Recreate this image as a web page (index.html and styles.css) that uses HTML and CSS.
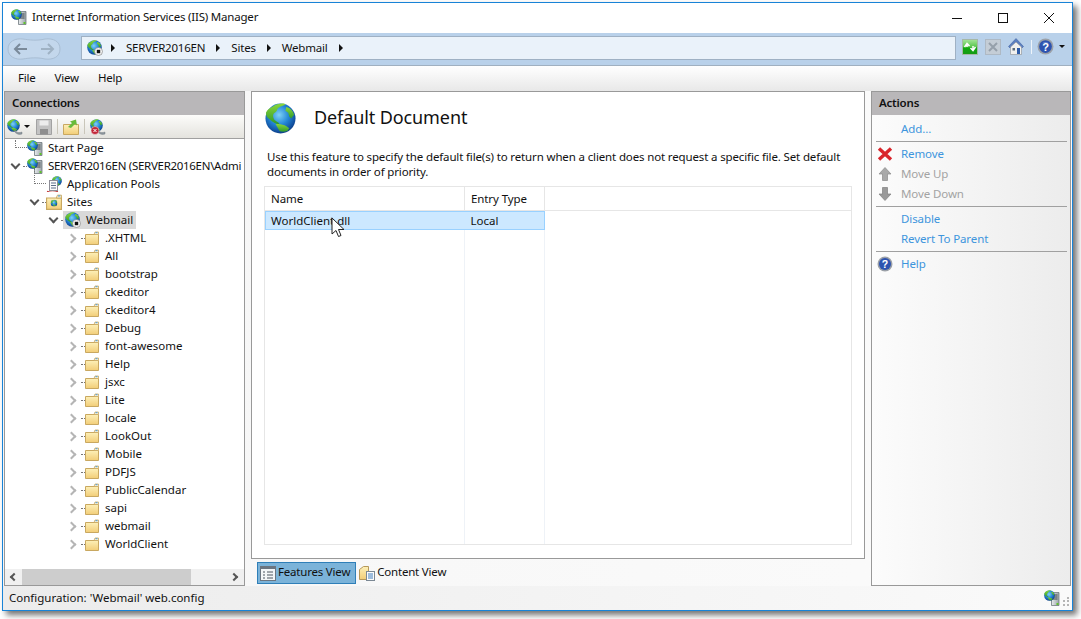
FILE: index.html
```html
<!DOCTYPE html>
<html lang="en">
<head>
    <meta charset="UTF-8">
    <title>Internet Information Services (IIS) Manager</title>
    <link rel="stylesheet" href="styles.css">
</head>
<body>
    <svg class="defs" width="0" height="0">
        <defs>
            <radialGradient id="sea" cx="45%" cy="38%" r="65%">
                <stop offset="0" stop-color="#7fd2f5"/>
                <stop offset="0.5" stop-color="#2487d8"/>
                <stop offset="0.85" stop-color="#12509f"/>
                <stop offset="1" stop-color="#0e3a7c"/>
            </radialGradient>
            <linearGradient id="landFill" x1="0" y1="0" x2="0" y2="1">
                <stop offset="0" stop-color="#8ad63a"/>
                <stop offset="1" stop-color="#2f9a2c"/>
            </linearGradient>
            <linearGradient id="folderFill" x1="0" y1="0" x2="0" y2="1">
                <stop offset="0" stop-color="#fdf0b8"/>
                <stop offset="1" stop-color="#f2cd77"/>
            </linearGradient>
            <linearGradient id="towerFill" x1="0" y1="0" x2="1" y2="0">
                <stop offset="0" stop-color="#e8ecee"/>
                <stop offset="1" stop-color="#9aa3a8"/>
            </linearGradient>
            <linearGradient id="goFill" x1="0" y1="0" x2="0" y2="1">
                <stop offset="0" stop-color="#a5e59a"/>
                <stop offset="0.5" stop-color="#58c64b"/>
                <stop offset="0.55" stop-color="#0fa80f"/>
                <stop offset="1" stop-color="#169a16"/>
            </linearGradient>
            <symbol id="globe" viewBox="0 0 32 32">
                <circle cx="16" cy="16" r="15.500" fill="url(#sea)"/>
                <path d="M9 3c3-2 8-3 12-2-1 2-5 2-7 4-2 1-1 4-4 5-2 1-2 4-1 6 1 3 5 3 6 6-3 0-7-2-10-5-3-2-4-4-4-7 1-3 4-5 8-7z" fill="url(#landFill)"/>
                <path d="M22 4c4 1 7 4 8 8l-3 4-2-2-1-4-3-2z" fill="url(#landFill)"/>
                <path d="M11 22c3-1 8 0 11 2l3 2-2 3c-3 1-6 1-8 0z" fill="url(#landFill)"/>
            </symbol>
            <symbol id="server" viewBox="0 0 16 16">
                <path d="M7.500 2.500h7.500v13h-7.500z" fill="url(#towerFill)" stroke="#6f787d" stroke-width="0.800"/>
                <path d="M9 5h4.500M9 7h4.500M9 9h4.500" stroke="#3f4649" stroke-width="1"/>
                <rect x="12.500" y="13" width="2" height="2" fill="#5fc32a"/>
                <use href="#globe" x="0" y="0" width="11" height="11"/>
            </symbol>
            <symbol id="folder" viewBox="0 0 14 14">
                <path d="M.5 3.500h13v10h-13z" fill="url(#folderFill)" stroke="#c9a860"/>
                <path d="M9 3.500l1-2.500h3.500v2.500z" fill="#f8f3dd" stroke="#c9a860" stroke-width="0.800"/>
                <path d="M10.500 1.700h2" stroke="#4f9bd8"/>
            </symbol>
            <symbol id="webglobe" viewBox="0 0 16 16">
                <use href="#globe" x="0" y="0" width="15" height="15"/>
                <circle cx="11.500" cy="11.500" r="4" fill="#f4f4f4" stroke="#777" stroke-width="0.600"/>
                <rect x="9.800" y="9.800" width="3.400" height="3.400" fill="#111"/>
            </symbol>
            <symbol id="connect" viewBox="0 0 16 16">
                <use href="#globe" x="0" y="0" width="13" height="13"/>
                <path d="M8 11c2 3 4 3 7 2v2c-3 1-6 0-8-3z" fill="#8e979e" stroke="#6b747b" stroke-width="0.400"/>
            </symbol>
            <symbol id="helpdot" viewBox="0 0 16 16">
                <circle cx="8" cy="8" r="7.500" fill="#9ba0a7"/>
                <circle cx="8" cy="8" r="6" fill="#2d53b0"/>
                <path d="M5 5a4 3 0 0 1 6 0" fill="#7d97d8"/>
            </symbol>
        </defs>
    </svg>

    <div class="window">
        <header class="titlebar">
            <svg class="title-icon"><use href="#server"/></svg>
            <span class="title-text">Internet Information Services (IIS) Manager</span>
            <div class="caption">
                <svg width="46" height="30"><path d="M18 15.500h10" stroke="#111"/></svg>
                <svg width="46" height="30"><rect x="18.500" y="10.500" width="9" height="9" fill="none" stroke="#111"/></svg>
                <svg width="46" height="30"><path d="M18 10l10 10M28 10l-10 10" stroke="#111" fill="none"/></svg>
            </div>
        </header>

        <nav class="navbar">
            <div class="nav-pill">
                <svg width="54" height="26" viewBox="0 0 54 26">
                    <path d="M1 13C1 5 9 2 16 3c6 1 14 2 22 0 8-1 15 2 15 10s-7 11-15 10c-8-2-16-1-22 0C9 24 1 21 1 13z" fill="#c3d7ec" stroke="#a9bed4"/>
                    <path d="M20 13H8m5-5l-5 5 5 5" fill="none" stroke="#7a8a9a" stroke-width="2"/>
                    <path d="M34 13h12m-5-5l5 5-5 5" fill="none" stroke="#9fb2c4" stroke-width="2"/>
                </svg>
            </div>
            <div class="address">
                <svg class="addr-icon"><use href="#webglobe"/></svg>
                <span class="crumb-arrow first"></span>
                <span>SERVER2016EN</span>
                <span class="crumb-arrow"></span>
                <span>Sites</span>
                <span class="crumb-arrow"></span>
                <span>Webmail</span>
                <span class="crumb-arrow"></span>
            </div>
            <div class="nav-tools">
                <svg width="16" height="16" viewBox="0 0 16 16">
                    <rect x="0.500" y="0.500" width="15" height="15" fill="url(#goFill)" stroke="#a6b8a6"/>
                    <path d="M2.500 8l2.500-3.500L7.500 7M5 5v3" stroke="#fff" stroke-width="1.500" fill="none"/>
                    <path d="M13.500 8L11 11.500 8.500 9M11 11V7" stroke="#fff" stroke-width="1.500" fill="none"/>
                </svg>
                <svg width="16" height="16" viewBox="0 0 16 16">
                    <rect x="0.500" y="0.500" width="15" height="15" fill="#c4cdd6" stroke="#aeb9c4"/>
                    <path d="M4 4l8 8M12 4l-8 8" stroke="#95a0ab" stroke-width="2"/>
                </svg>
                <svg width="16" height="17" viewBox="0 0 16 17">
                    <path d="M8 .5L0.500 8.500 2 10l6-6 6 6 1.500-1.500z" fill="#5b7fc0" stroke="#3a5a9a" stroke-width="0.500"/>
                    <path d="M2.500 9L8 4l5.500 5v7.500h-11z" fill="#f1f1ee" stroke="#8b8f93" stroke-width="0.600"/>
                    <rect x="9" y="10" width="3" height="6" fill="#2e5ca8"/>
                    <rect x="4.500" y="10" width="2.500" height="2.500" fill="#5a6a7a"/>
                </svg>
                <span class="tool-sep"></span>
                <svg class="help-big" viewBox="0 0 16 16">
                    <use href="#helpdot"/>
                    <text x="8" y="11.800" class="help-mark">?</text>
                </svg>
                <span class="caret"></span>
            </div>
        </nav>

        <div class="menubar">
            <span>File</span>
            <span>View</span>
            <span>Help</span>
        </div>

        <div class="workspace">
            <section class="connections">
                <h2 class="pane-title">Connections</h2>
                <div class="conn-tools">
                    <svg class="tool-icon"><use href="#connect"/></svg>
                    <span class="caret small"></span>
                    <svg class="tool-icon save" viewBox="0 0 16 16">
                        <path d="M.5.500h15v15H.5z" fill="#c2c2c2" stroke="#a2a2a2"/>
                        <rect x="3.500" y="1.500" width="9" height="5" fill="#ececec"/>
                        <rect x="4" y="10" width="8" height="5.500" fill="#8e8e8e"/>
                    </svg>
                    <span class="conn-sep"></span>
                    <svg class="tool-icon" viewBox="0 0 16 16">
                        <path d="M.5 5.500h15v10H.5z" fill="url(#folderFill)" stroke="#c9a860"/>
                        <path d="M5 8l4-4-2-1.500L13 .5l1 6-2-1.500-4 4z" fill="#67bb3a"/>
                    </svg>
                    <span class="conn-sep"></span>
                    <svg class="tool-icon" viewBox="0 0 16 16">
                        <use href="#connect"/>
                        <circle cx="5" cy="11.500" r="4" fill="#c2283a" stroke="#eee" stroke-width="0.500"/>
                        <path d="M3.500 10l3 3M6.500 10l-3 3" stroke="#fff"/>
                    </svg>
                </div>
                <div class="tree">
                    <div class="tree-row">
                        <span class="elbow elbow-start"></span>
                        <svg class="node-icon"><use href="#server"/></svg>
                        <span class="label">Start Page</span>
                    </div>
                    <div class="tree-row">
                        <span class="expander open"></span><span class="dots"></span>
                        <svg class="node-icon"><use href="#server"/></svg>
                        <span class="label server-label">SERVER2016EN (SERVER2016EN\Admi</span>
                    </div>
                    <div class="tree-row level-1">
                        <span class="elbow"></span>
                        <svg class="node-icon" viewBox="0 0 16 16">
                            <use href="#globe" x="6" y="0" width="10" height="10"/>
                            <path d="M1 15.500c3 1 8 1 11 0" stroke="#c23b3b" stroke-width="1.500" fill="none"/>
                            <rect x="3.500" y="4.500" width="8" height="10" fill="#fbfbfb" stroke="#8d8d96"/>
                            <path d="M5 7h5M5 9.500h5M5 12h5" stroke="#5b6f8a"/>
                        </svg>
                        <span class="label">Application Pools</span>
                    </div>
                    <div class="tree-row level-1">
                        <span class="expander open"></span><span class="dots"></span>
                        <svg class="node-icon" viewBox="0 0 14 14">
                            <use href="#folder" width="14" height="14"/>
                            <use href="#globe" x="4" y="5" width="6" height="6"/>
                        </svg>
                        <span class="label">Sites</span>
                    </div>
                    <div class="tree-row level-2">
                        <span class="expander open"></span><span class="dots"></span>
                        <span class="selected-node">
                            <svg class="node-icon"><use href="#webglobe"/></svg>
                            <span class="label">Webmail</span>
                        </span>
                    </div>
                    <div class="tree-row level-3"><span class="expander"></span><span class="dots"></span><svg class="folder-icon"><use href="#folder"/></svg><span class="label">.XHTML</span></div>
                    <div class="tree-row level-3"><span class="expander"></span><span class="dots"></span><svg class="folder-icon"><use href="#folder"/></svg><span class="label">All</span></div>
                    <div class="tree-row level-3"><span class="expander"></span><span class="dots"></span><svg class="folder-icon"><use href="#folder"/></svg><span class="label">bootstrap</span></div>
                    <div class="tree-row level-3"><span class="expander"></span><span class="dots"></span><svg class="folder-icon"><use href="#folder"/></svg><span class="label">ckeditor</span></div>
                    <div class="tree-row level-3"><span class="expander"></span><span class="dots"></span><svg class="folder-icon"><use href="#folder"/></svg><span class="label">ckeditor4</span></div>
                    <div class="tree-row level-3"><span class="expander"></span><span class="dots"></span><svg class="folder-icon"><use href="#folder"/></svg><span class="label">Debug</span></div>
                    <div class="tree-row level-3"><span class="expander"></span><span class="dots"></span><svg class="folder-icon"><use href="#folder"/></svg><span class="label">font-awesome</span></div>
                    <div class="tree-row level-3"><span class="expander"></span><span class="dots"></span><svg class="folder-icon"><use href="#folder"/></svg><span class="label">Help</span></div>
                    <div class="tree-row level-3"><span class="expander"></span><span class="dots"></span><svg class="folder-icon"><use href="#folder"/></svg><span class="label">jsxc</span></div>
                    <div class="tree-row level-3"><span class="expander"></span><span class="dots"></span><svg class="folder-icon"><use href="#folder"/></svg><span class="label">Lite</span></div>
                    <div class="tree-row level-3"><span class="expander"></span><span class="dots"></span><svg class="folder-icon"><use href="#folder"/></svg><span class="label">locale</span></div>
                    <div class="tree-row level-3"><span class="expander"></span><span class="dots"></span><svg class="folder-icon"><use href="#folder"/></svg><span class="label">LookOut</span></div>
                    <div class="tree-row level-3"><span class="expander"></span><span class="dots"></span><svg class="folder-icon"><use href="#folder"/></svg><span class="label">Mobile</span></div>
                    <div class="tree-row level-3"><span class="expander"></span><span class="dots"></span><svg class="folder-icon"><use href="#folder"/></svg><span class="label">PDFJS</span></div>
                    <div class="tree-row level-3"><span class="expander"></span><span class="dots"></span><svg class="folder-icon"><use href="#folder"/></svg><span class="label">PublicCalendar</span></div>
                    <div class="tree-row level-3"><span class="expander"></span><span class="dots"></span><svg class="folder-icon"><use href="#folder"/></svg><span class="label">sapi</span></div>
                    <div class="tree-row level-3"><span class="expander"></span><span class="dots"></span><svg class="folder-icon"><use href="#folder"/></svg><span class="label">webmail</span></div>
                    <div class="tree-row level-3"><span class="expander"></span><span class="dots"></span><svg class="folder-icon"><use href="#folder"/></svg><span class="label">WorldClient</span></div>
                </div>
                <div class="hscroll">
                    <span class="scroll-btn left"></span>
                    <div class="scroll-track"><div class="scroll-thumb"></div></div>
                    <span class="scroll-btn right"></span>
                </div>
            </section>

            <section class="center">
                <div class="feature">
                    <div class="feature-head">
                        <svg class="feature-icon"><use href="#globe"/></svg>
                        <h1>Default Document</h1>
                    </div>
                    <p class="feature-desc">Use this feature to specify the default file(s) to return when a client does not request a specific file. Set default documents in order of priority.</p>
                    <div class="list">
                        <div class="list-head">
                            <div class="col-name">Name</div>
                            <div class="col-type">Entry Type</div>
                        </div>
                        <div class="list-row">
                            <div class="col-name">WorldClient.dll</div>
                            <div class="col-type">Local</div>
                        </div>
                        <div class="list-fill">
                            <div class="col-name"></div>
                            <div class="col-type"></div>
                        </div>
                        <svg class="cursor" width="14" height="21" viewBox="0 0 14 21">
                            <path d="M1 1v16l4-3.500 2.500 6 2.500-1-2.500-6H13z" fill="#fff" stroke="#222"/>
                        </svg>
                    </div>
                </div>
                <div class="view-tabs">
                    <div class="view-tab active">
                        <svg width="16" height="16" viewBox="0 0 16 16">
                            <rect x="0.500" y="1.500" width="15" height="14" fill="#f3f6f8" stroke="#6b7580"/>
                            <rect x="1" y="2" width="14" height="2" fill="#6b7580"/>
                            <path d="M3 7h2M3 10h2M3 13h2M7 7h6M7 10h6M7 13h6" stroke="#4c5661"/>
                        </svg>
                        <span class="label">Features View</span>
                    </div>
                    <div class="view-tab">
                        <svg width="16" height="16" viewBox="0 0 16 16">
                            <path d="M.5 4.500l4-3h5v13h-9z" fill="url(#folderFill)" stroke="#b5985a"/>
                            <rect x="7.500" y="6.500" width="8" height="9" fill="#fbfbfb" stroke="#7b8894"/>
                            <path d="M9 9h5M9 11h5M9 13h5" stroke="#3f7fc0"/>
                        </svg>
                        <span class="label">Content View</span>
                    </div>
                </div>
            </section>

            <aside class="actions">
                <h2 class="pane-title">Actions</h2>
                <div class="action-list">
                    <div class="action-group">
                        <div class="action"><span class="action-icon"></span><span class="label">Add...</span></div>
                    </div>
                    <div class="action-group">
                        <div class="action">
                            <svg class="action-icon" viewBox="0 0 16 16"><path d="M2 2.500l12 11M14 2.500l-12 11" stroke="#d9252b" stroke-width="3.400" fill="none"/></svg>
                            <span class="label">Remove</span>
                        </div>
                        <div class="action disabled">
                            <svg class="action-icon" viewBox="0 0 16 16"><path d="M8 1.500L14 8h-3.500v6.500h-5V8H2z" fill="#a9a9a9" stroke="#8b8b8b" stroke-width="0.700"/></svg>
                            <span class="label">Move Up</span>
                        </div>
                        <div class="action disabled">
                            <svg class="action-icon" viewBox="0 0 16 16"><path d="M8 14.500L14 8h-3.500V1.500h-5V8H2z" fill="#9a9a9a" stroke="#808080" stroke-width="0.700"/></svg>
                            <span class="label">Move Down</span>
                        </div>
                    </div>
                    <div class="action-group">
                        <div class="action"><span class="action-icon"></span><span class="label">Disable</span></div>
                        <div class="action"><span class="action-icon"></span><span class="label">Revert To Parent</span></div>
                    </div>
                    <div class="action-group">
                        <div class="action">
                            <svg class="action-icon" viewBox="0 0 16 16">
                                <use href="#helpdot"/>
                                <text x="8" y="11.800" class="help-mark">?</text>
                            </svg>
                            <span class="label">Help</span>
                        </div>
                    </div>
                </div>
            </aside>
        </div>

        <footer class="statusbar">
            <span class="status-text">Configuration: 'Webmail' web.config</span>
            <svg class="status-icon"><use href="#server"/></svg>
            <svg class="grip" width="8" height="10" viewBox="0 0 8 10">
                <path d="M5 1h2v2H5zM1 4h2v2H1zM5 4h2v2H5zM1 8h2v2H1zM5 8h2v2H5z" fill="#b5b5b5"/>
            </svg>
        </footer>
    </div>
</body>
</html>
```

FILE: styles.css
```css
html, body {
    margin: 0;
    padding: 0;
    height: 100%;
    background: #fff;
    overflow: hidden;
}
body {
    font-family: "Noto Sans", "Open Sans", sans-serif;
    font-size: 11.500px;
    letter-spacing: -0.2px;
    color: #111;
}
.defs {
    display: block;
    height: 0;
}
/* labels sit a pixel higher than the icons next to them */
.label {
    margin-bottom: 2px;
}
.window {
    width: 1069px;
    height: 607px;
    margin: 2px 0 0 2px;
    display: flex;
    flex-direction: column;
    background: #f0f0f0;
    border: 1px solid #1883d7;
    box-shadow: 4px 4px 6px rgba(0, 0, 0, 0.55);
}

/* title bar */
.titlebar {
    height: 30px;
    flex: none;
    display: flex;
    align-items: center;
    background: #fff;
    padding-left: 8px;
}
.title-icon {
    width: 16px;
    height: 16px;
    margin: 0 5px 3px 0;
}
.title-text {
    flex: 1;
    margin-bottom: 4px;
}
.caption {
    display: flex;
    height: 30px;
}

/* nav bar */
.navbar {
    height: 33px;
    flex: none;
    display: flex;
    align-items: center;
    background: #b9d1ea;
    border-bottom: 1px solid #a0b0c0;
    box-sizing: border-box;
    padding-left: 4px;
}
.nav-pill {
    width: 54px;
    height: 26px;
    margin-right: 20px;
}
.address {
    width: 873px;
    height: 21px;
    display: flex;
    align-items: center;
    background: #eaf2fa;
    border: 1px solid #9fb1c4;
    margin-top: -2px;
    padding-bottom: 1px;
}
.addr-icon {
    width: 16px;
    height: 16px;
    margin: 0 8px 0 5px;
}
.crumb-arrow {
    width: 0;
    height: 0;
    margin: 0 11px;
    border-left: 4px solid #111;
    border-top: 4px solid transparent;
    border-bottom: 4px solid transparent;
}
.crumb-arrow.first {
    margin-left: 0;
}
.nav-tools {
    display: flex;
    align-items: center;
    gap: 7px;
    margin: 0 0 5px 6px;
}
.tool-sep {
    width: 1px;
    height: 14px;
    background: #eef4fa;
}
.help-big {
    width: 17px;
    height: 17px;
    margin-left: -2px;
}
.help-mark {
    font-family: "Liberation Sans", sans-serif;
    font-size: 10.500px;
    font-weight: bold;
    fill: #fff;
    text-anchor: middle;
}
.caret {
    width: 0;
    height: 0;
    border-top: 3px solid #111;
    border-left: 3px solid transparent;
    border-right: 3px solid transparent;
    margin-left: -2px;
}

/* menu */
.menubar {
    height: 25px;
    flex: none;
    box-sizing: border-box;
    display: flex;
    align-items: center;
    gap: 19px;
    padding: 0 0 3px 15px;
    background: linear-gradient(#fff, #e8e8e8);
}

/* main area */
.workspace {
    flex: 1;
    min-height: 0;
    display: flex;
    padding: 0 1px;
    gap: 6px;
    background: linear-gradient(90deg, #f6f6f6, #fbfbfb);
}
.pane-title {
    margin: 0;
    height: 23px;
    line-height: 21px;
    font-size: 11.500px;
    font-weight: 600;
    padding-left: 7px;
    background: #b9b7b9;
    color: #111;
    flex: none;
}
.connections {
    width: 241px;
    flex: none;
    display: flex;
    flex-direction: column;
    border: 1px solid #999;
    box-sizing: border-box;
    background: #fff;
}
.conn-tools {
    height: 24px;
    flex: none;
    display: flex;
    align-items: center;
    gap: 3px;
    padding-left: 2px;
    background: linear-gradient(#fcfcfa, #e4e3de);
    border-bottom: 1px solid #a0a0a0;
    box-sizing: border-box;
}
.tool-icon {
    width: 16px;
    height: 16px;
}
.caret.small {
    margin: 0 3px 0 -2px;
}
.conn-sep {
    width: 1px;
    height: 15px;
    background: #c9c6ba;
    margin: 0 2px;
}

/* tree */
.tree {
    flex: 1;
    min-height: 0;
    overflow: hidden;
    letter-spacing: 0;
}
.tree-row {
    height: 18px;
    display: flex;
    align-items: center;
    padding-left: 6px;
    white-space: nowrap;
}
.tree-row.level-1 {
    padding-left: 25px;
}
.tree-row.level-2 {
    padding-left: 44px;
}
.tree-row.level-3 {
    padding-left: 63px;
}
.server-label {
    letter-spacing: -0.3px;
}
.expander {
    width: 9px;
    height: 9px;
    flex: none;
    position: relative;
}
.expander::after {
    content: "";
    position: absolute;
    left: 0;
    top: 1px;
    width: 5px;
    height: 5px;
    border-right: 2px solid #b5b5b5;
    border-bottom: 2px solid #b5b5b5;
    transform: rotate(-45deg);
}
.expander.open::after {
    left: 1px;
    top: -1px;
    border-color: #555;
    transform: rotate(45deg);
}
.dots {
    width: 4px;
    margin: 0 0 0 3px;
    flex: none;
    border-top: 1px dotted #777;
}
.level-3 .dots {
    margin-left: 4px;
}
.elbow {
    width: 16px;
    height: 18px;
    flex: none;
    box-sizing: border-box;
    position: relative;
}
.elbow::before {
    content: "";
    position: absolute;
    left: 4px;
    top: -6px;
    height: 15px;
    width: 12px;
    box-sizing: border-box;
    border-left: 1px dotted #777;
    border-bottom: 1px dotted #777;
}
.elbow-start::before {
    top: 1px;
    height: 8px;
}
.node-icon {
    width: 16px;
    height: 16px;
    flex: none;
    margin-right: 5px;
}
.folder-icon {
    width: 14px;
    height: 14px;
    flex: none;
    margin-right: 6px;
}
.selected-node {
    display: flex;
    align-items: center;
    height: 18px;
    background: #d9d9d9;
    margin-left: -2px;
    padding: 0 3px 0 2px;
}
.hscroll {
    height: 16px;
    flex: none;
    display: flex;
    background: #f0f0f0;
}
.scroll-btn {
    width: 17px;
    flex: none;
    position: relative;
}
.scroll-btn::after {
    content: "";
    position: absolute;
    top: 5px;
    width: 4px;
    height: 4px;
    border-left: 2px solid #555;
    border-bottom: 2px solid #555;
}
.scroll-btn.left::after {
    left: 6px;
    transform: rotate(45deg);
}
.scroll-btn.right::after {
    left: 4px;
    transform: rotate(225deg);
}
.scroll-track {
    flex: 1;
}
.scroll-thumb {
    width: 169px;
    height: 100%;
    background: #cdcdcd;
}

/* center */
.center {
    flex: 1;
    min-width: 0;
    display: flex;
    flex-direction: column;
}
.feature {
    height: 468px;
    flex: none;
    box-sizing: border-box;
    border: 1px solid #999;
    background: #fff;
    padding: 0 12px;
}
.feature-head {
    display: flex;
    align-items: center;
    height: 53px;
}
.feature-icon {
    width: 31px;
    height: 31px;
    margin: 0 18px 0 1px;
}
.feature-head h1 {
    margin: 0 0 4px;
    font-size: 18px;
    font-weight: 400;
    letter-spacing: -0.1px;
}
.feature-desc {
    margin: 4px 0 7px 3px;
    line-height: 15px;
    width: 580px;
    letter-spacing: -0.14px;
}
.list {
    position: relative;
    height: 359px;
    border: 1px solid #e6e6e6;
    display: flex;
    flex-direction: column;
    box-sizing: border-box;
    letter-spacing: -0.1px;
}
.list-head, .list-row, .list-fill {
    display: flex;
}
.list-head {
    height: 24px;
    flex: none;
    align-items: center;
    border-bottom: 1px solid #e6e6e6;
    box-sizing: border-box;
}
.list-head .col-name, .list-head .col-type {
    height: 100%;
    line-height: 24px;
}
.col-name {
    width: 200px;
    box-sizing: border-box;
    padding-left: 6px;
    border-right: 1px solid #e6e6e6;
}
.col-type {
    width: 80px;
    box-sizing: border-box;
    padding-left: 6px;
    border-right: 1px solid #e6e6e6;
}
.list-fill .col-name, .list-fill .col-type {
    border-right-color: #eef2f7;
}
.list-row {
    height: 19px;
    flex: none;
    line-height: 17px;
    width: 280px;
    box-sizing: border-box;
    background: #cce8ff;
    border: 1px solid #99d1ff;
    letter-spacing: 0;
}
.list-row .col-name {
    width: 200px;
    padding-left: 5px;
    border-right: none;
}
.list-row .col-type {
    border-right: none;
}
.list-fill {
    flex: 1;
}
.cursor {
    position: absolute;
    left: 66px;
    top: 30px;
}
.view-tabs {
    flex: 1;
    display: flex;
    align-items: center;
    padding-left: 6px;
    gap: 0;
}
.view-tab {
    display: flex;
    align-items: center;
    gap: 2px;
    height: 20px;
    padding: 0 5px 0 2px;
    border: 1px solid transparent;
}
.view-tab.active {
    background: #7bb3d9;
    border-color: #2f7fb8;
}

/* actions */
.actions {
    width: 200px;
    flex: none;
    display: flex;
    flex-direction: column;
    box-sizing: border-box;
    border: 1px solid #999;
    background: linear-gradient(90deg, #fcfcfc, #ececec);
}
.action-list {
    padding: 4px 3px 0 4px;
    letter-spacing: -0.1px;
}
.action-group {
    border-bottom: 1px solid #a0a0a0;
    padding: 0 0 2px;
    margin-bottom: 2px;
}
.action-group:last-child {
    border-bottom: none;
}
.action {
    height: 20px;
    display: flex;
    align-items: center;
    gap: 8px;
    color: #3d95dd;
}
.action.disabled {
    color: #a3a3a3;
}
.action-icon {
    width: 16px;
    height: 16px;
    margin-left: 1px;
    flex: none;
}

/* status bar */
.statusbar {
    height: 24px;
    flex: none;
    display: flex;
    align-items: center;
    padding: 0 2px 0 6px;
    background: linear-gradient(90deg, #ececec, #fafafa);
}
.status-text {
    flex: 1;
    margin-bottom: 2px;
    letter-spacing: 0;
}
.status-icon {
    width: 16px;
    height: 16px;
}
.grip {
    margin: 6px 0 0 2px;
}
```
